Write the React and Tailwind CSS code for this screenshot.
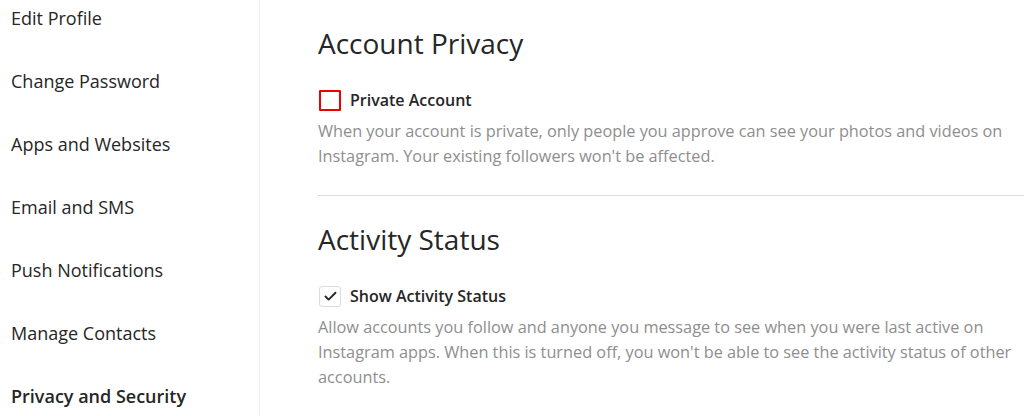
import { Check } from 'lucide-react';

const menu = [
  'Edit Profile',
  'Change Password',
  'Apps and Websites',
  'Email and SMS',
  'Push Notifications',
  'Manage Contacts',
  'Privacy and Security',
];

const Section = ({ title, label, checked, children }) => (
  <div className="border-b border-[#dbdbdb] pt-[25px] pb-[26px]">
    <h2 className="text-[28px] leading-[36px] text-[#262626] font-normal">{title}</h2>
    <label className="mt-[27px] flex items-center h-[24px]">
      {checked ? (
        <span className="w-[22px] h-[21px] ml-[1px] rounded-[3px] border border-[#dbdbdb] flex items-center justify-center">
          <Check size={15} strokeWidth={3} className="text-[#262626]" />
        </span>
      ) : (
        <span className="w-[22px] h-[21px] ml-[1px] rounded-[1px] border-2 border-[#ed0000]" />
      )}
      <span className="ml-[9px] text-[16px] font-semibold text-[#262626]">{label}</span>
    </label>
    <p className="mt-[7px] text-[16.3px] leading-[25px] text-[#8e8e8e] pr-[10px]">{children}</p>
  </div>
);

const App = () => {
  return (
    <div
      className="w-[1024px] h-[416px] overflow-hidden bg-white flex"
      style={{ fontFamily: '"Open Sans", "Noto Sans", sans-serif' }}
    >
      {/* Sidebar */}
      <div className="w-[260px] shrink-0 border-r border-[#efefef]">
        <ul className="-mt-[13px]">
          {menu.map((item) => (
            <li
              key={item}
              className={`h-[63px] flex items-center px-[11px] text-[18px] text-[#262626] ${
                item === 'Privacy and Security' ? 'font-semibold' : ''
              }`}
            >
              {item}
            </li>
          ))}
        </ul>
      </div>

      {/* Main */}
      <div className="flex-1 pl-[58px]">
        <Section title="Account Privacy" label="Private Account" checked={false}>
          When your account is private, only people you approve can see your photos and videos on
          Instagram. Your existing followers won't be affected.
        </Section>
        <Section title="Activity Status" label="Show Activity Status" checked>
          Allow accounts you follow and anyone you message to see when you were last active on
          Instagram apps. When this is turned off, you won't be able to see the activity status of
          other accounts.
        </Section>
      </div>
    </div>
  );
};

export default App;
